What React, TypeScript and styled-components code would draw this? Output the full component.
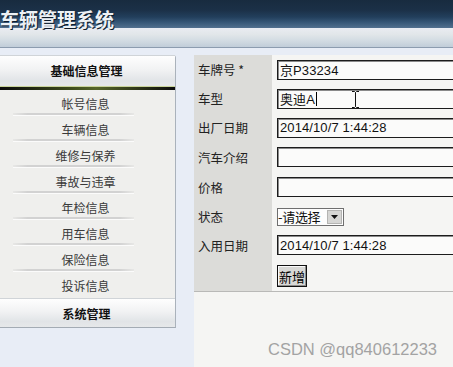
import React from "react";
import styled, { createGlobalStyle } from "styled-components";

const GlobalStyle = createGlobalStyle`
  html, body {
    margin: 0;
    padding: 0;
    background: #e8edf6;
    overflow: hidden;
  }
  body {
    font-family: "Noto Sans CJK SC", "Liberation Sans", sans-serif;
    font-size: 12px;
    color: #222;
  }
  * { box-sizing: border-box; }
`;

const Page = styled.div`
  width: 453px;
  height: 367px;
  overflow: hidden;
  display: flex;
  flex-direction: column;
`;

const Header = styled.div`
  height: 28px;
  position: relative;
  z-index: 1;
  background: linear-gradient(
    to bottom,
    #182b3f 0px,
    #1b3047 10px,
    #223f5c 17px,
    #355575 22px,
    #52708f 28px
  );
`;

const Title = styled.div`
  padding-top: 9px;
  font-size: 19px;
  line-height: 19px;
  font-weight: 700;
  color: #edf1f5;
  text-shadow: 1px 1px 0 #0e1c2b;
  white-space: nowrap;
`;

const Band = styled.div`
  height: 20px;
  border-bottom: 1px solid #8c9caf;
  background: linear-gradient(
    to bottom,
    #eaecf2 0%,
    #e1e6e9 35%,
    #d3dce3 65%,
    #c1cdd9 100%
  );
`;

const Main = styled.div`
  flex: 1;
  display: flex;
  gap: 18px;
  padding-top: 7px;
  min-height: 0;
`;

const Sidebar = styled.div`
  width: 176px;
  flex: none;
  align-self: flex-start;
  background: #efefed;
  border-right: 1px solid #aab2bb;
  border-bottom: 1px solid #a3abb4;
  border-top-right-radius: 3px;
  display: flex;
  flex-direction: column;
`;

const SideHead = styled.div<{ $h: number; $lift?: number }>`
  height: ${(p) => p.$h}px;
  display: flex;
  align-items: center;
  justify-content: center;
  padding-right: 2px;
  padding-bottom: ${(p) => p.$lift ?? 0}px;
  font-size: 12px;
  font-weight: 700;
  color: #111;
  background: linear-gradient(to bottom, #fefefe 0%, #f1f2f3 45%, #e1e4e7 80%, #e6e8ea 100%);
  border-top: 1px solid #d0d4d8;
`;

const DarkRule = styled.div`
  height: 3px;
  background: linear-gradient(to right, #0b0b0b 0%, #3c4a1c 40%, #55652a 55%, #0b0b0b 100%);
  box-shadow: 0 -1px 0 #c9d49a;
`;

const ItemList = styled.div`
  display: flex;
  flex-direction: column;
`;

const Item = styled.div<{ $last?: boolean }>`
  height: 26px;
  position: relative;
  display: flex;
  align-items: center;
  justify-content: center;
  padding-right: 4px;
  font-size: 12px;
  color: #3a3a3a;
  &::after {
    content: "";
    display: ${(p) => (p.$last ? "none" : "block")};
    position: absolute;
    left: 13px;
    width: 121px;
    bottom: 0;
    height: 2px;
    background: linear-gradient(to right, rgba(200,200,200,0.2), #d2d2d2 12%, #d2d2d2 88%, rgba(200,200,200,0.2));
    border-bottom: 1px solid #fbfbfb;
  }
`;

const Content = styled.div`
  flex: 1;
  position: relative;
  background: #f5f5f3;
`;

const FormTable = styled.div`
  display: flex;
  flex-direction: column;
  border-bottom: 1px solid #b9b9b7;
`;

const Row = styled.div<{ $h: number }>`
  height: ${(p) => p.$h}px;
  display: flex;
`;

const Label = styled.div`
  width: 78px;
  flex: none;
  background: #dcdcd9;
  padding-left: 4px;
  display: flex;
  align-items: center;
  font-size: 12.5px;
  color: #222;
  white-space: nowrap;
`;

const Value = styled.div<{ $top?: boolean }>`
  flex: 1;
  padding-left: 5px;
  display: flex;
  align-items: ${(p) => (p.$top ? "flex-start" : "center")};
  padding-top: ${(p) => (p.$top ? "6px" : "0")};
  position: relative;
`;

const TextBox = styled.div`
  width: 240px;
  flex: none;
  height: 20px;
  border: 1px solid #1c1c1c;
  box-shadow: inset 1px 1px 0 #8a8a8a;
  background: #fbfbfa;
  padding-left: 2px;
  display: flex;
  align-items: center;
  font-family: "Liberation Sans", "Noto Sans CJK SC", sans-serif;
  font-size: 13px;
  letter-spacing: 0.1px;
  color: #111;
  white-space: nowrap;
  position: relative;
`;

const Caret = styled.span`
  display: inline-block;
  width: 1px;
  height: 14px;
  margin-left: 1px;
  background: #000;
`;

const Cursor = styled.svg`
  position: absolute;
  left: 73px;
  top: 0px;
`;

const Select = styled.div`
  height: 18px;
  width: 67px;
  border: 1px solid #6f6f6f;
  background: #fdfdfd;
  display: flex;
  align-items: center;
  font-size: 13px;
  color: #111;
  white-space: nowrap;
`;

const SelectText = styled.span`
  flex: 1;
  line-height: 16px;
  letter-spacing: -0.3px;
`;

const SelectButton = styled.span`
  width: 15px;
  height: 14px;
  margin-right: 1px;
  background: #d6d6d4;
  border: 1px solid #b4b4b2;
  display: flex;
  align-items: center;
  justify-content: center;
`;

const Button = styled.div`
  width: 30px;
  height: 22px;
  border: 1px solid #111;
  box-shadow: inset -1px -1px 0 #8e8e8c, inset 1px 1px 0 #fafafa;
  background: #d8d8d5;
  display: flex;
  align-items: center;
  justify-content: center;
  font-size: 13px;
  color: #000;
`;

const Watermark = styled.div`
  position: absolute;
  left: 74px;
  top: 286px;
  font-family: "Liberation Sans", sans-serif;
  font-size: 16.5px;
  line-height: 1;
  color: #a3a3a3;
  white-space: nowrap;
`;

const menu = ["帐号信息", "车辆信息", "维修与保养", "事故与违章", "年检信息", "用车信息", "保险信息", "投诉信息"];

const fields: { label: string; value?: string; kind: "text" | "select"; h: number }[] = [
  { label: "车牌号 *", value: "京P33234", kind: "text", h: 29 },
  { label: "车型", value: "奥迪A", kind: "text", h: 29 },
  { label: "出厂日期", value: "2014/10/7 1:44:28", kind: "text", h: 29 },
  { label: "汽车介绍", value: "", kind: "text", h: 30 },
  { label: "价格", value: "", kind: "text", h: 30 },
  { label: "状态", kind: "select", h: 29 },
  { label: "入用日期", value: "2014/10/7 1:44:28", kind: "text", h: 28 },
];

export default function App() {
  return (
    <Page>
      <GlobalStyle />
      <Header>
        <Title>车辆管理系统</Title>
      </Header>
      <Band />
      <Main>
        <Sidebar>
          <SideHead $h={32} $lift={3}>基础信息管理</SideHead>
          <DarkRule />
          <ItemList>
            {menu.map((m, i) => (
              <Item key={m} $last={i === menu.length - 1}>
                {m}
              </Item>
            ))}
          </ItemList>
          <SideHead $h={29}>系统管理</SideHead>
        </Sidebar>
        <Content>
          <FormTable>
            {fields.map((f, i) => (
              <Row key={f.label} $h={f.h}>
                <Label>{f.label}</Label>
                <Value>
                  {f.kind === "text" ? (
                    <TextBox>
                      {f.value}
                      {i === 1 && <Caret />}
                      {i === 1 && (
                        <Cursor width="9" height="19" viewBox="0 0 9 19">
                          <path
                            d="M1 1.5h2.5l1 1 1-1H8M4.5 2.5v14M1 17.5h2.5l1-1 1 1H8"
                            fill="none"
                            stroke="#111"
                            strokeWidth="1"
                          />
                        </Cursor>
                      )}
                    </TextBox>
                  ) : (
                    <Select>
                      <SelectText>-请选择</SelectText>
                      <SelectButton>
                        <svg width="7" height="4" viewBox="0 0 7 4">
                          <path d="M0 0h7L3.5 4z" fill="#111" />
                        </svg>
                      </SelectButton>
                    </Select>
                  )}
                </Value>
              </Row>
            ))}
            <Row $h={32}>
              <Label />
              <Value $top>
                <Button>新增</Button>
              </Value>
            </Row>
          </FormTable>
          <Watermark>CSDN @qq840612233</Watermark>
        </Content>
      </Main>
    </Page>
  );
}
